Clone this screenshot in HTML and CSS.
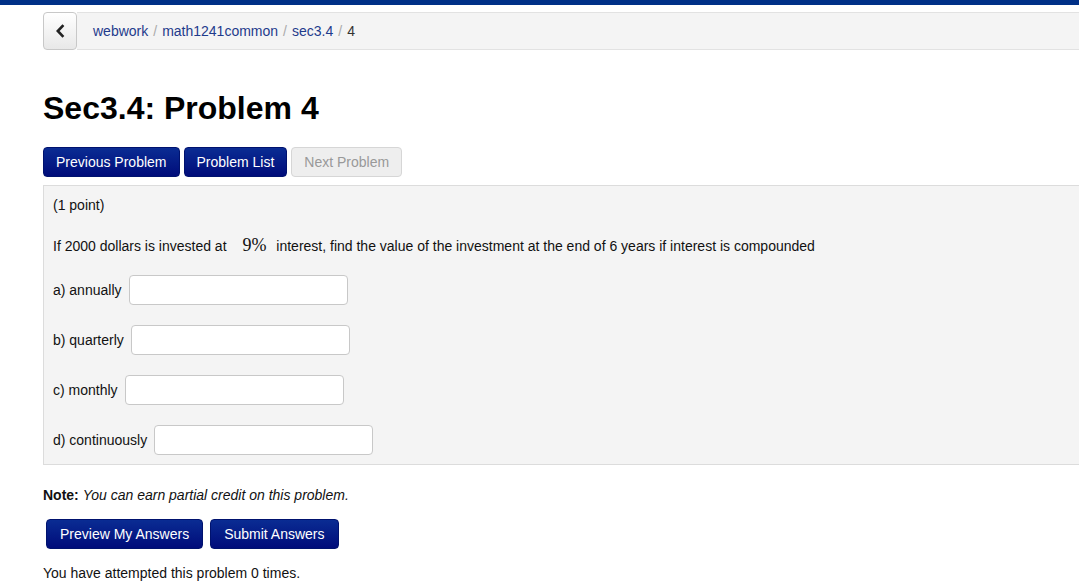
FILE: index.html
```html
<!DOCTYPE html>
<html>
<head>
<meta charset="utf-8">
<link rel="stylesheet" href="styles.css">
</head>
<body>
<div class="topbar"></div>
<div class="page">
  <div class="crumbs">
    <a class="back" href="#"><svg width="10" height="14" viewBox="0 0 10 14"><path d="M7.5 2 L2.8 7 L7.5 12" fill="none" stroke="#222" stroke-width="2.6" stroke-linecap="square" stroke-linejoin="miter"/></svg></a>
    <div class="trail">
      <a href="#">webwork</a><span class="sep">/</span><a href="#">math1241common</a><span class="sep">/</span><a href="#">sec3.4</a><span class="sep">/</span><span class="cur">4</span>
    </div>
  </div>
  <h1 class="title">Sec3.4: Problem 4</h1>
  <div class="nav">
    <button class="btn">Previous Problem</button>
    <button class="btn">Problem List</button>
    <button class="btn disabled">Next Problem</button>
  </div>
  <div class="problem">
    <p class="pts">(1 point)</p>
    <p class="stmt">If 2000 dollars is invested at <span class="math">9%</span> interest, find the value of the investment at the end of 6 years if interest is compounded</p>
    <div class="row"><label>a) annually</label><input class="ans" type="text"></div>
    <div class="row"><label>b) quarterly</label><input class="ans" type="text"></div>
    <div class="row"><label>c) monthly</label><input class="ans" type="text"></div>
    <div class="row"><label>d) continuously</label><input class="ans" type="text"></div>
  </div>
  <p class="note"><b>Note:</b> <i>You can earn partial credit on this problem.</i></p>
  <div class="submit">
    <button class="btn big">Preview My Answers</button>
    <button class="btn big">Submit Answers</button>
  </div>
  <p class="attempts">You have attempted this problem 0 times.</p>
</div>
</body>
</html>
```

FILE: styles.css
```css
html, body {
  margin: 0;
  padding: 0;
  overflow: hidden;
  background: #fff;
}
body {
  font-family: "Liberation Sans", Arial, sans-serif;
  font-size: 14px;
  color: #111;
}
.topbar {
  height: 5px;
  background: #003087;
}
.page {
  padding-left: 43px;
  margin-right: -20px;
}
.crumbs {
  display: flex;
  margin-top: 7px;
  height: 38px;
}
.back {
  width: 32px;
  flex: none;
  display: flex;
  align-items: center;
  justify-content: center;
  border: 1px solid #c8c8c8;
  border-radius: 4px;
  background: linear-gradient(#ffffff, #e8e8e8);
}
.trail {
  flex: 1;
  display: flex;
  align-items: center;
  padding-left: 16px;
  background: #f4f4f4;
  border-top: 1px solid #e2e2e2;
  border-bottom: 1px solid #e2e2e2;
}
.trail a {
  color: #1f3b8c;
  text-decoration: none;
}
.trail .sep {
  color: #aaa;
  padding: 0 5px;
}
.trail .cur {
  color: #333;
}
.title {
  font-size: 32px;
  font-weight: bold;
  margin: 40px 0 0;
  line-height: 36px;
  color: #000;
}
.nav {
  display: flex;
  gap: 4px;
  margin-top: 21px;
}
.btn {
  font-family: "Liberation Sans", Arial, sans-serif;
  font-size: 14px;
  height: 30px;
  padding: 0 12px;
  border: 1px solid #00126e;
  border-radius: 4px;
  color: #fff;
  background: linear-gradient(#0a2c93, #000c7a);
}
.btn.disabled {
  color: #999;
  background: #eee;
  border-color: #d6d6d6;
}
.problem {
  margin-top: 8px;
  height: 278px;
  background: #f4f4f4;
  border: 1px solid #dcdcdc;
  padding: 0 9px;
}
.pts {
  margin: 11px 0 0;
  line-height: 16px;
}
.stmt {
  margin: 23px 0 0;
  line-height: 18px;
}
.math {
  font-family: "Liberation Serif", "Times New Roman", serif;
  font-size: 18px;
  padding: 0 6px 0 12px;
}
.row {
  display: flex;
  align-items: center;
  gap: 7px;
  margin-top: 20px;
  height: 30px;
}
.row + .row {
  margin-top: 20px;
}
.ans {
  width: 219px;
  height: 30px;
  box-sizing: border-box;
  border: 1px solid #c8c8c8;
  border-radius: 4px;
  background: #fff;
}
.note {
  margin: 22px 0 0;
  line-height: 16px;
}
.submit {
  display: flex;
  gap: 7px;
  margin-top: 16px;
  padding-left: 3px;
}
.btn.big {
  padding: 0 13px;
}
.attempts {
  margin: 16px 0 0;
  line-height: 16px;
}
```
